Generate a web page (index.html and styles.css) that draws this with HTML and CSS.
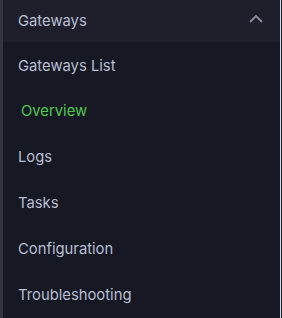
FILE: index.html
```html
<!DOCTYPE html>
<html lang="en">
<head>
    <meta charset="UTF-8">
    <title>Gateways</title>
    <link rel="stylesheet" href="styles.css">
</head>
<body>
    <nav class="sidebar">
        <div class="group-head">
            <span>Gateways</span>
            <svg class="chevron" width="16" height="10" viewBox="0 0 16 10">
                <path d="M2 8 L8 2 L14 8" fill="none" stroke="#8a8e9c" stroke-width="1.8"/>
            </svg>
        </div>
        <ul class="menu">
            <li>Gateways List</li>
            <li class="active">Overview</li>
            <li>Logs</li>
            <li>Tasks</li>
            <li>Configuration</li>
            <li>Troubleshooting</li>
        </ul>
    </nav>
</body>
</html>
```
FILE: styles.css
```css
body {
    margin: 0;
    background: #161824;
    font-family: Inter, "Noto Sans", sans-serif;
}

.sidebar {
    display: flex;
    flex-direction: column;
    width: 281px;
    height: 318px;
    background: #161824;
    border-left: 3px solid #34353b;
    border-right: 1px solid #cfe0f7;
    box-sizing: border-box;
    overflow: hidden;
}

.group-head {
    display: flex;
    justify-content: space-between;
    align-items: center;
    height: 42px;
    padding: 0 16px 0 15px;
    background: #1e1f2b;
    color: #b9bfd3;
    font-size: 14.8px;
    box-sizing: border-box;
}

.chevron {
    margin-top: -4px;
}

.menu {
    list-style: none;
    margin: 0;
    padding: 0;
}

.menu li {
    height: 46px;
    line-height: 46px;
    padding-left: 15px;
    color: #b9bfd3;
    font-size: 14.8px;
}

.menu li:first-child {
    line-height: 48px;
}

.menu li.active {
    padding-left: 18px;
    color: #4cc94c;
}
```
